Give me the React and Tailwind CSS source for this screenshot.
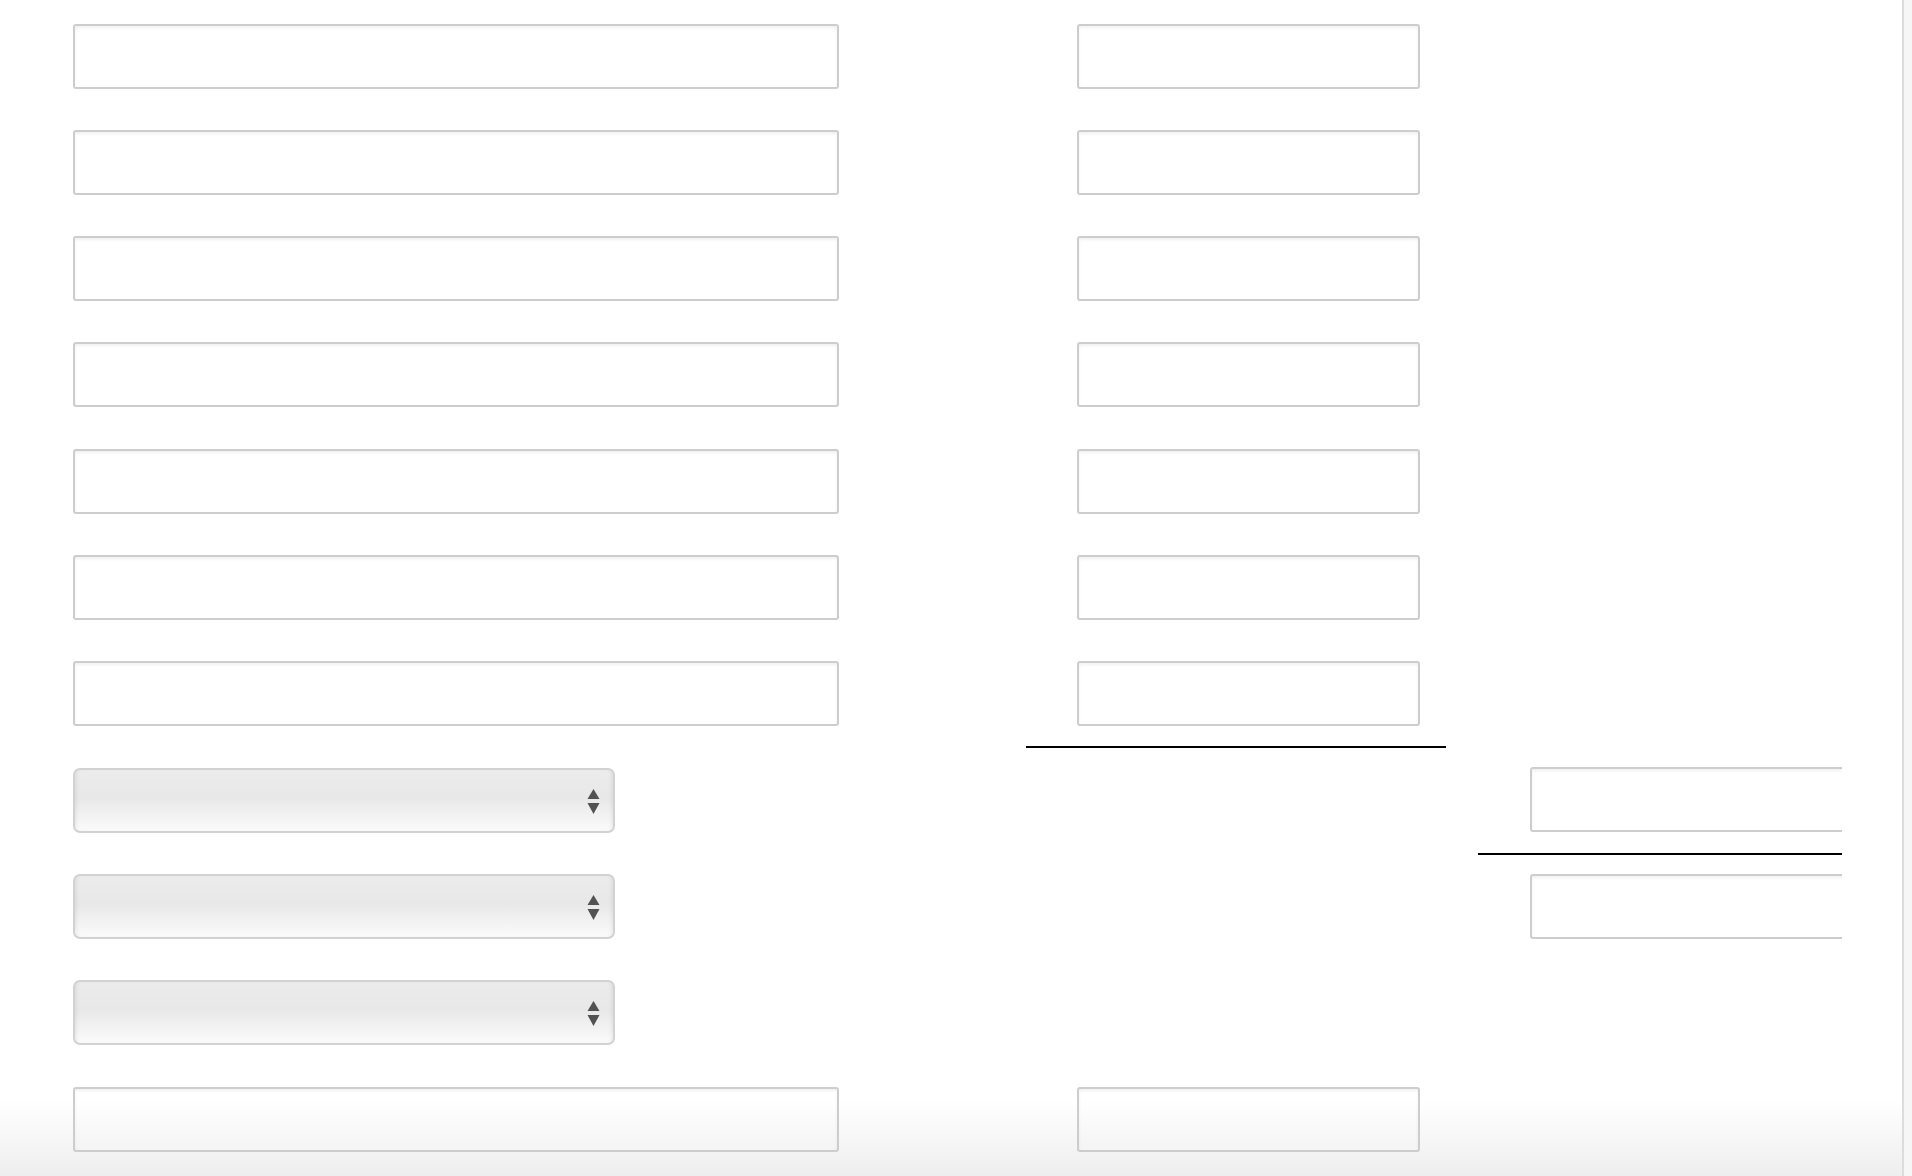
import React from 'react';

const field = "block h-[65px] rounded-[3px] border-2 border-[#cdcdcd] bg-transparent shadow-[inset_0_2px_3px_rgba(0,0,0,0.06)] outline-none";

function TextBox({ className = "" }) {
  return <input type="text" className={`${field} ${className}`} />;
}

function SelectBox() {
  return (
    <div className="relative h-[65px] w-[542px] rounded-[7px] border-2 border-[#d2d2d2] bg-[linear-gradient(to_bottom,#ececec_0%,#e8e8e8_45%,#f2f2f2_75%,#fbfbfb_100%)] shadow-[inset_4px_0_4px_-3px_rgba(0,0,0,0.08),inset_-4px_0_4px_-3px_rgba(0,0,0,0.08)]">
      <svg className="absolute right-[13px] top-[18px]" width="13" height="28" viewBox="0 0 13 28">
        <path d="M6.5 1 L12.5 11 L0.5 11 Z" fill="#525252" />
        <path d="M0.5 15 L12.5 15 L6.5 26 Z" fill="#525252" />
      </svg>
    </div>
  );
}

// middle cell starts at x 1026, 420 wide; the input sits 51px in
function Middle({ line = false, show = true }) {
  return (
    <div className="ml-[187px] w-[420px] shrink-0">
      {show && <TextBox className="ml-[51px] w-[343px]" />}
      {line && <div className="mt-[20px] h-[2px] w-full bg-black" />}
    </div>
  );
}

// right cell starts at x 1478, clipped at 1842
function Right({ line = false, className = "" }) {
  return (
    <div className={`ml-[32px] w-[364px] shrink-0 overflow-hidden ${className}`}>
      <TextBox className="ml-[52px] w-[400px]" />
      {line && <div className="mt-[21px] h-[2px] w-full bg-black" />}
    </div>
  );
}

export default function App() {
  const rowH = ["h-[106px]", "h-[106px]", "h-[106px]", "h-[107px]", "h-[106px]", "h-[106px]"];

  return (
    <div className="flex h-[1176px] w-full overflow-hidden bg-[linear-gradient(to_bottom,#ffffff_0px,#ffffff_1100px,#eeeeee_1176px)] font-['Liberation_Sans',sans-serif]">
      <main className="flex-1 pl-[73px] pt-[24px]">
        {rowH.map((h, i) => (
          <div key={i} className={`flex items-start ${h}`}>
            <TextBox className="w-[766px]" />
            <Middle />
          </div>
        ))}

        <div className="flex h-[107px] items-start">
          <TextBox className="w-[766px]" />
          <Middle line />
        </div>

        <div className="flex h-[106px] items-start">
          <div className="w-[766px] shrink-0"><SelectBox /></div>
          <Middle show={false} />
          <Right line className="-mt-px" />
        </div>

        <div className="flex h-[106px] items-start">
          <div className="w-[766px] shrink-0"><SelectBox /></div>
          <Middle show={false} />
          <Right />
        </div>

        <div className="flex h-[107px] items-start">
          <div className="w-[766px] shrink-0"><SelectBox /></div>
        </div>

        <div className="flex h-[106px] items-start">
          <TextBox className="w-[766px]" />
          <Middle />
        </div>
      </main>

      {/* scroll track */}
      <div className="h-full w-[10px] shrink-0 border-l-2 border-[#dcdcdc] bg-[#f6f6f6]" />
    </div>
  );
}
